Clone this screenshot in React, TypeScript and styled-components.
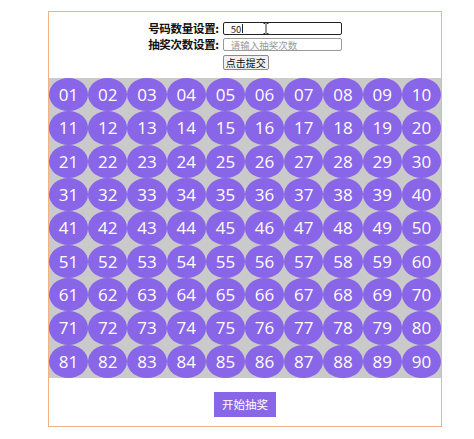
import React from "react";
import styled, { createGlobalStyle } from "styled-components";

const Global = createGlobalStyle`
  html, body { margin: 0; padding: 0; background: #ffffff; }
  body { font-family: "Noto Sans CJK SC", "Open Sans", sans-serif; }
`;

const Panel = styled.div`
  margin: 11px 0 0 48px;
  width: 392px;
  border: 1px solid #f4b183;
  display: flex;
  flex-direction: column;
`;

const Form = styled.div`
  display: grid;
  grid-template-columns: auto auto;
  justify-content: center;
  column-gap: 4px;
  row-gap: 3px;
  padding: 10px 0 8px 0;
  align-items: center;
`;

const Label = styled.label`
  font-family: "Noto Sans CJK SC", sans-serif;
  font-weight: 700;
  font-size: 11.5px;
  line-height: 13px;
  color: #111;
  text-align: right;
  letter-spacing: -0.3px;
`;

const InputWrap = styled.div`
  position: relative;
  width: 119px;
  height: 13px;
`;

const Input = styled.input<{ $focused?: boolean }>`
  display: block;
  box-sizing: border-box;
  width: 119px;
  height: 13px;
  padding: 0 0 0 7px;
  margin: 0;
  font-family: "Noto Sans CJK SC", sans-serif;
  font-size: 9.5px;
  line-height: 11px;
  color: #222;
  outline: none;
  border: ${(p) => (p.$focused ? "1.5px solid #222" : "1px solid #9a9a9a")};
  border-radius: 2px;
  background: #fff;
  &::placeholder { color: #9a9a9a; }
`;

const Caret = styled.span`
  position: absolute;
  left: 19px;
  top: 2px;
  width: 1px;
  height: 9px;
  background: #222;
`;

const Beam = styled.svg`
  position: absolute;
  left: 40px;
  top: 1px;
`;

const Submit = styled.button`
  grid-column: 2;
  justify-self: start;
  display: block;
  box-sizing: border-box;
  width: 46px;
  height: 15px;
  padding: 0;
  margin: 1px 0 0 0;
  font-family: "Noto Sans CJK SC", sans-serif;
  font-size: 10px;
  line-height: 13px;
  color: #111;
  background: #f0f0f0;
  border: 1px solid #8a8a8a;
  border-radius: 2px;
`;

const Balls = styled.div`
  display: grid;
  grid-template-columns: repeat(10, 1fr);
  grid-auto-rows: 33.33px;
  background: #cacaca;
`;

const Ball = styled.div`
  display: flex;
  align-items: center;
  justify-content: center;
  border-radius: 50%;
  background: #8966e8;
  color: #ffffff;
  font-family: "Open Sans", sans-serif;
  font-size: 17px;
`;

const Footer = styled.div`
  display: flex;
  justify-content: center;
  padding: 14px 0 9px 0;
`;

const Start = styled.button`
  width: 62px;
  height: 25px;
  padding: 0;
  border: none;
  background: #8966e8;
  color: #ffffff;
  font-family: "Noto Sans CJK SC", sans-serif;
  font-size: 11.5px;
`;

export default function App() {
  const nums = Array.from({ length: 90 }, (_, i) => String(i + 1).padStart(2, "0"));
  return (
    <>
      <Global />
      <Panel>
        <Form>
          <Label>号码数量设置:</Label>
          <InputWrap>
            <Input $focused defaultValue="50" />
            <Caret />
            <Beam width="6" height="11" viewBox="0 0 6 11">
              <path d="M0.5 0.5 H2.5 M3.5 0.5 H5.5 M3 1 V10 M0.5 10.5 H2.5 M3.5 10.5 H5.5" stroke="#333" strokeWidth="1" fill="none" />
            </Beam>
          </InputWrap>
          <Label>抽奖次数设置:</Label>
          <InputWrap>
            <Input placeholder="请输入抽奖次数" />
          </InputWrap>
          <Submit>点击提交</Submit>
        </Form>
        <Balls>
          {nums.map((n) => (
            <Ball key={n}>{n}</Ball>
          ))}
        </Balls>
        <Footer>
          <Start>开始抽奖</Start>
        </Footer>
      </Panel>
    </>
  );
}
